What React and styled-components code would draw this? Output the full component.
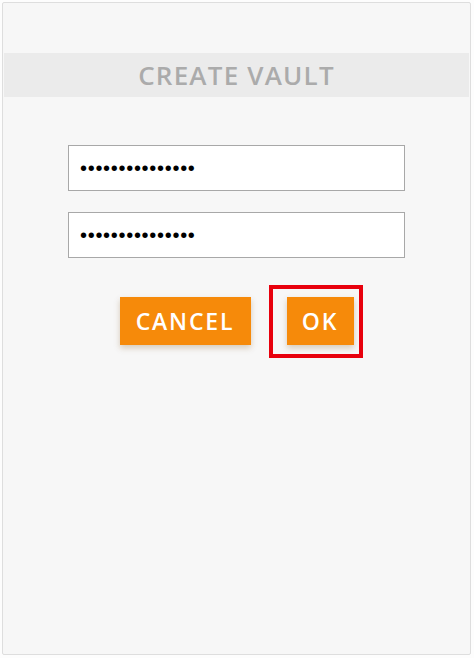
import React from 'react';
import styled, { createGlobalStyle } from 'styled-components';

const GlobalStyle = createGlobalStyle`
  html, body {
    margin: 0;
    padding: 0;
    background: #ffffff;
  }
  body {
    font-family: "Open Sans", "Liberation Sans", Arial, sans-serif;
  }
`;

const Screen = styled.div`
  width: 474px;
  height: 658px;
  overflow: hidden;
  background: #fdfdfd;
  padding: 2px 3px 3px 2px;
  box-sizing: border-box;
`;

const Dialog = styled.div`
  height: 100%;
  background: #f7f7f7;
  border: 1px solid #dedede;
  border-radius: 2px;
  box-sizing: border-box;
  padding-top: 50px;
`;

const TitleBar = styled.div`
  height: 44px;
  margin: 0 1px;
  background: #ebebeb;
  display: flex;
  align-items: center;
  justify-content: center;
`;

const Title = styled.h1`
  margin: 0;
  font-family: "Open Sans", "Liberation Sans", sans-serif;
  font-weight: 600;
  font-size: 26px;
  letter-spacing: 1.2px;
  color: #ababab;
`;

const Form = styled.div`
  display: flex;
  flex-direction: column;
  align-items: center;
  padding-top: 48px;
  gap: 21px;
`;

const PasswordInput = styled.input`
  width: 337px;
  height: 46px;
  box-sizing: border-box;
  border: 1px solid #a8a8a8;
  background: #ffffff;
  padding: 0 11px;
  font-family: "Liberation Sans", Arial, sans-serif;
  font-size: 20px;
  letter-spacing: 0.7px;
  color: #000;
  outline: none;
`;

const Actions = styled.div`
  display: flex;
  justify-content: center;
  gap: 36px;
  margin-top: 39px;
`;

const Button = styled.button`
  width: ${(p) => p.$w}px;
  height: 48px;
  padding: 0;
  border: none;
  border-radius: 0;
  background: #f68a0a;
  color: #ffffff;
  font-family: "Open Sans", "Liberation Sans", sans-serif;
  font-weight: 600;
  font-size: 23px;
  letter-spacing: 1.8px;
  box-shadow: 0 3px 6px rgba(120, 70, 0, 0.25);
  cursor: pointer;
`;

const Highlight = styled.div`
  position: relative;
`;

const Marker = styled.span`
  position: absolute;
  left: -18px;
  top: -12px;
  right: -9px;
  bottom: -13px;
  border: 4px solid #e8000d;
  pointer-events: none;
`;

export default function App() {
  return (
    <>
      <GlobalStyle />
      <Screen>
        <Dialog>
          <TitleBar>
            <Title>CREATE VAULT</Title>
          </TitleBar>
          <Form>
            <PasswordInput type="password" defaultValue="vaultpassword12" />
            <PasswordInput type="password" defaultValue="vaultpassword12" />
          </Form>
          <Actions>
            <Button $w={131}>CANCEL</Button>
            <Highlight>
              <Button $w={67}>OK</Button>
              <Marker />
            </Highlight>
          </Actions>
        </Dialog>
      </Screen>
    </>
  );
}
